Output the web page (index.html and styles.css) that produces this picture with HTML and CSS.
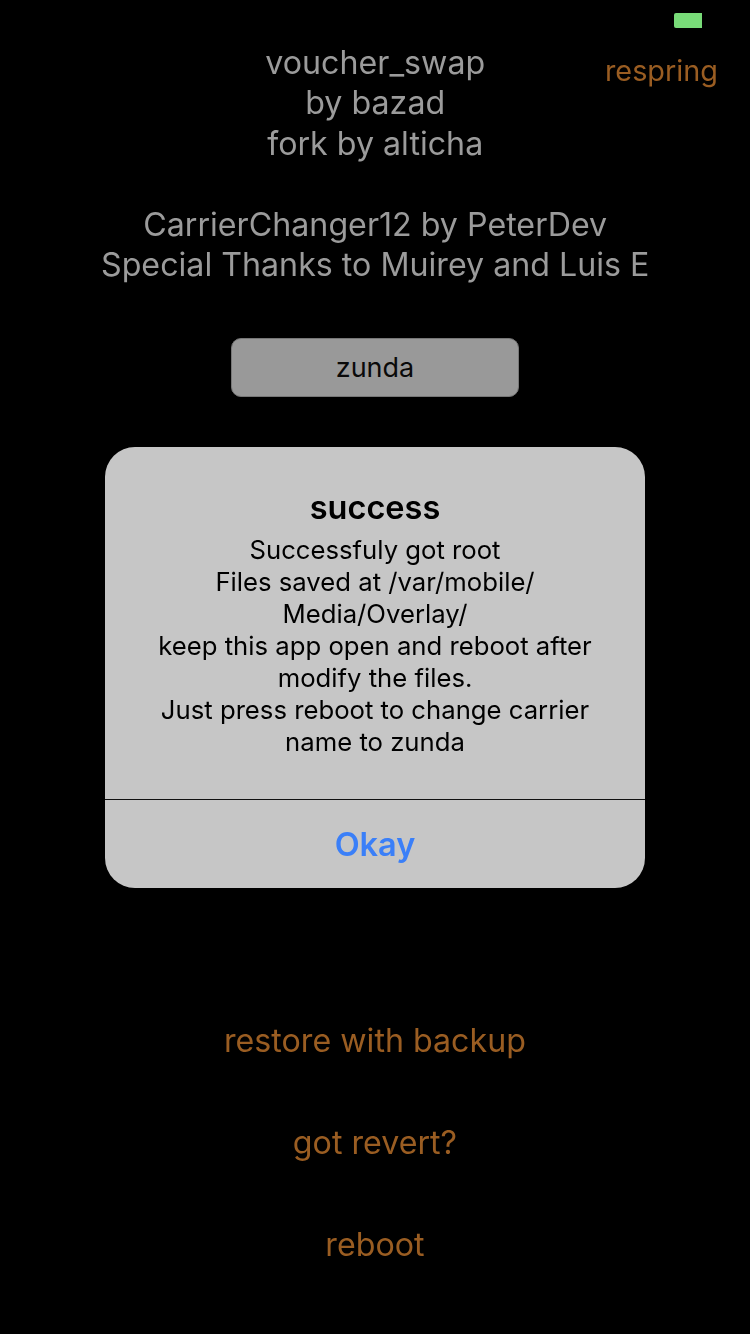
FILE: index.html
```html
<!DOCTYPE html>
<html lang="en">
<head>
<meta charset="utf-8">
<title>voucher_swap</title>
<link rel="stylesheet" href="styles.css">
</head>
<body>
<main class="screen">
  <header class="top">
    <div class="spacer"></div>
    <p class="credits">voucher_swap<br>by bazad<br>fork by alticha<br><br>CarrierChanger12 by PeterDev<br>Special Thanks to Muirey and Luis E</p>
    <div class="side">
      <div class="battery"></div>
      <a class="respring">respring</a>
    </div>
  </header>
  <div class="field">zunda</div>
  <section class="alert">
    <div class="alert-body">
      <h1 class="alert-title">success</h1>
      <p class="alert-text">Successfuly got root<br>Files saved at /var/mobile/<br>Media/Overlay/<br>keep this app open and reboot after<br>modify the files.<br>Just press reboot to change carrier<br>name to zunda</p>
    </div>
    <div class="alert-action">Okay</div>
  </section>
  <nav class="actions">
    <a class="action">restore with backup</a>
    <a class="action">got revert?</a>
    <a class="action">reboot</a>
  </nav>
</main>
</body>
</html>
```
FILE: styles.css
```css
* { box-sizing: border-box; }
html, body { margin: 0; padding: 0; background: #000; }
.screen {
  width: 750px;
  height: 1334px;
  background: #000;
  display: flex;
  flex-direction: column;
  align-items: center;
  font-family: Inter, "Liberation Sans", sans-serif;
  overflow: hidden;
}
.top {
  width: 100%;
  display: grid;
  grid-template-columns: minmax(0, 1fr) auto minmax(0, 1fr);
  padding-top: 43px;
}
.credits, .respring, .actions, .alert-title, .alert-text, .alert-action {
  will-change: transform;
}
.credits {
  margin: 0;
  font-size: 32.2px;
  line-height: 40.4px;
  text-align: center;
  color: #9b9b9b;
  white-space: nowrap;
}
.side {
  margin-top: -30px;
  display: flex;
  flex-direction: column;
  align-items: flex-end;
  padding-right: 32px;
}
.battery {
  width: 28px;
  height: 15px;
  margin-right: 16px;
  background: #78db78;
  border-radius: 2px 0 0 2px;
}
.respring {
  margin-top: 23px;
  font-size: 28.8px;
  line-height: 40px;
  color: #9a5d22;
  white-space: nowrap;
}
.field {
  margin-top: 53px;
  width: 288px;
  height: 59px;
  display: flex;
  align-items: center;
  justify-content: center;
  background: #999;
  border: 1px solid #777;
  border-radius: 10px;
  font-size: 27px;
  color: #0a0a0a;
}
.alert {
  margin-top: 50px;
  width: 540px;
  height: 441px;
  background: #c6c6c6;
  border-radius: 30px;
  display: flex;
  flex-direction: column;
  overflow: hidden;
}
.alert-body {
  height: 353px;
  padding-top: 41px;
  text-align: center;
  color: #000;
  border-bottom: 1px solid #111;
}
.alert-title {
  margin: 0;
  font-size: 32.5px;
  line-height: 40px;
  font-weight: 600;
}
.alert-text {
  margin: 6px 0 0;
  font-size: 25.7px;
  line-height: 32px;
}
.alert-action {
  flex: 1;
  display: flex;
  align-items: center;
  justify-content: center;
  font-size: 32.5px;
  font-weight: 600;
  color: #3a7ff8;
}
.actions {
  margin-top: 133px;
  display: flex;
  flex-direction: column;
  align-items: center;
  gap: 62px;
}
.action {
  font-size: 32.2px;
  line-height: 40px;
  color: #9a5d22;
  white-space: nowrap;
}
```
